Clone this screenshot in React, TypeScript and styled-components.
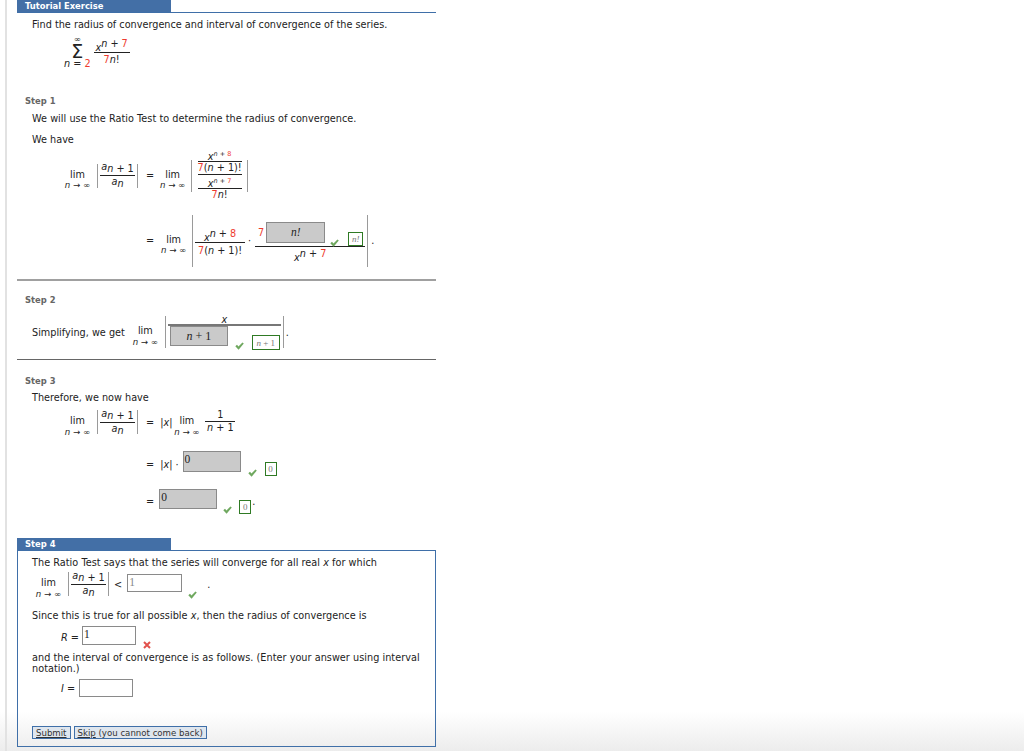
import styled, { createGlobalStyle } from "styled-components"

const GlobalStyle = createGlobalStyle`
	html, body {
		margin: 0;
		padding: 0;
		background: #fff;
	}
	body {
		height: 751px;
		overflow: hidden;
		font-family: "DejaVu Sans", Verdana, sans-serif;
		font-size: 9.7px;
		color: #222;
		background: linear-gradient(to bottom, #fff 0, #fff 712px, #ececec 751px);
	}
`

const Page = styled.div`
	margin-left: 5px;
	padding-left: 10px;
	width: 419px;
	height: 751px;
	border-left: 2px solid #e2e2e2;
	box-sizing: content-box;
`

const TabHeader = styled.div`
	height: 12px;
	border-bottom: 1px solid #3f6fa8;
`

const Tab = styled.div`
	width: 146px;
	height: 12px;
	padding-left: 8px;
	background: #436fa6;
	color: #fff;
	font-weight: bold;
	line-height: 12px;
	font-size: 8.4px;
`

const Sentence = styled.div<{ $top?: number; $left?: number; $spread?: boolean }>`
	margin: ${(p) => p.$top ?? 0}px 0 0 ${(p) => p.$left ?? 15}px;
	line-height: 11px;
	letter-spacing: ${(p) => (p.$spread ? 0.035 : 0)}px;
`

const StepLabel = styled.div<{ $top: number }>`
	margin: ${(p) => p.$top}px 0 0 8px;
	font-weight: bold;
	color: #666;
	font-size: 8.4px;
	line-height: 12px;
`

const Rule = styled.div<{ $top: number; $size: number; $color: string }>`
	margin-top: ${(p) => p.$top}px;
	height: ${(p) => p.$size}px;
	background: ${(p) => p.$color};
`

const MathRow = styled.div<{ $top: number; $left: number; $height: number }>`
	display: flex;
	align-items: center;
	margin: ${(p) => p.$top}px 0 0 ${(p) => p.$left}px;
	height: ${(p) => p.$height}px;
`

const I = styled.i`
	font-style: italic;
`

const Red = styled.span`
	color: #ee3b2e;
`

const Sup = styled.span<{ $tiny?: boolean }>`
	font-size: ${(p) => (p.$tiny ? 6.5 : 9.7)}px;
	vertical-align: 4px;
	line-height: 0;
	font-style: normal;
`

const SubA = styled.span`
	font-size: 9.7px;
	vertical-align: 2px;
	font-style: italic;
	line-height: 0;
`

const SigmaStack = styled.div`
	display: inline-flex;
	flex-direction: column;
	align-items: center;
	flex: none;
	line-height: 11px;
	white-space: pre;
`

const Sigma = styled.span`
	font-size: 19px;
	line-height: 13px;
`

const Frac = styled.div<{ $width?: number }>`
	display: inline-flex;
	flex-direction: column;
	align-items: center;
	width: ${(p) => (p.$width ? `${p.$width}px` : "auto")};
	flex: none;
`

const Num = styled.div<{ $height?: number; $tight?: boolean }>`
	display: flex;
	align-items: flex-end;
	justify-content: center;
	white-space: pre;
	height: ${(p) => p.$height ?? 12}px;
	line-height: ${(p) => (p.$tight ? 8 : 12)}px;
`

const Den = styled.div<{ $height?: number; $bar?: number; $barColor?: string; $pad?: number }>`
	align-self: stretch;
	display: flex;
	align-items: flex-start;
	justify-content: center;
	white-space: pre;
	box-sizing: content-box;
	padding-top: ${(p) => p.$pad ?? 0}px;
	border-top: ${(p) => p.$bar ?? 1}px solid ${(p) => p.$barColor ?? "#222"};
	height: ${(p) => (p.$height ?? 12) - (p.$pad ?? 0)}px;
	line-height: 12px;
`

const Lim = styled.div<{ $width?: number }>`
	display: inline-flex;
	flex-direction: column;
	align-items: center;
	width: ${(p) => p.$width ?? 31}px;
	margin-top: 9px;
	line-height: 10.5px;
	flex: none;
`

const LimTo = styled.span`
	font-size: 8.6px;
	white-space: pre;
`

const Abs = styled.div<{ $height: number; $width?: number }>`
	display: flex;
	align-items: center;
	justify-content: center;
	height: ${(p) => p.$height}px;
	width: ${(p) => (p.$width ? `${p.$width}px` : "auto")};
	padding: 0 2px;
	border-left: 1px solid #9a9a9a;
	border-right: 1px solid #9a9a9a;
	box-sizing: border-box;
	flex: none;
`

const Gap = styled.span<{ $w: number }>`
	display: inline-block;
	width: ${(p) => p.$w}px;
	flex: none;
`

const AnswerBox = styled.div<{ $w: number; $h: number; $fill?: boolean; $center?: boolean; $muted?: boolean }>`
	display: flex;
	align-items: ${(p) => (p.$center ? "center" : "flex-start")};
	justify-content: ${(p) => (p.$center ? "center" : "flex-start")};
	width: ${(p) => p.$w}px;
	height: ${(p) => p.$h}px;
	box-sizing: border-box;
	padding-left: ${(p) => (p.$center ? 0 : 1)}px;
	border: 1px solid #8a8a8a;
	background: ${(p) => (p.$fill ? "#cacaca" : "#fff")};
	color: ${(p) => (p.$muted ? "#888" : "#222")};
	font-family: "Liberation Serif", serif;
	font-size: 11.5px;
	line-height: 14px;
	flex: none;
`

const KeyBox = styled.div<{ $w: number; $h: number }>`
	display: flex;
	align-items: center;
	justify-content: center;
	width: ${(p) => p.$w}px;
	height: ${(p) => p.$h}px;
	box-sizing: border-box;
	border: 1px solid #2f7a24;
	background: #fff;
	color: #777;
	font-family: "Liberation Serif", serif;
	font-size: 9px;
	flex: none;
`

const Raised = styled.div<{ $y: number }>`
	display: flex;
	align-items: center;
	transform: translateY(${(p) => p.$y}px);
	flex: none;
`

const SerifItalic = styled.span`
	font-style: italic;
	font-family: "Liberation Serif", serif;
`

const BoxSum = styled.span`
	font-size: 12px;
`

const Mark = styled.svg`
	display: block;
	flex: none;
`

const Check = () => (
	<Mark width="9" height="8" viewBox="0 0 9 8">
		<path d="M0.3 4.2 L2 2.8 L3.5 4.4 L7.4 0.4 L8.8 1.5 L3.6 7.8 Z" fill="#6fa85f" />
	</Mark>
)

const Cross = () => (
	<Mark width="8" height="8" viewBox="0 0 8 8">
		<path d="M1 1 L7 7 M7 1 L1 7" stroke="#e2524d" strokeWidth="2" />
	</Mark>
)

const StepBox = styled.div`
	height: 197px;
	box-sizing: border-box;
	border: 1px solid #3f6fa8;
`

const Actions = styled.div`
	display: flex;
	gap: 3px;
	margin: 29px 0 0 14px;
`

const Button = styled.button`
	height: 13px;
	padding: 0 3px;
	margin: 0;
	border: 1px solid #3f6fa8;
	background: #dfe6ee;
	color: #333;
	font-family: "DejaVu Sans", Verdana, sans-serif;
	font-size: 8.6px;
	line-height: 10px;
`

const Under = styled.span`
	text-decoration: underline;
`

const LimN = ({ width }: { width?: number }) => (
	<Lim $width={width}>
		lim
		<LimTo>
			<I>n</I> → ∞
		</LimTo>
	</Lim>
)

const RatioAbs = () => (
	<Abs $height={24} $width={41}>
		<Frac $width={35}>
			<Num>
				<span>
					<SubA>a</SubA>
					<I>n</I> + 1
				</span>
			</Num>
			<Den $pad={2}>
				<span>
					<SubA>a</SubA>
					<I>n</I>
				</span>
			</Den>
		</Frac>
	</Abs>
)

const App = () => {
	return (
		<>
			<GlobalStyle />
			<Page>
				<TabHeader>
					<Tab>Tutorial Exercise</Tab>
				</TabHeader>
				<Sentence $top={6}>Find the radius of convergence and interval of convergence of the series.</Sentence>

				<MathRow $top={5} $left={47} $height={33}>
					<SigmaStack>
						<LimTo>∞</LimTo>
						<Sigma>Σ</Sigma>
						<span>
							<I>n</I> = <Red>2</Red>
						</span>
					</SigmaStack>
					<Gap $w={3} />
					<Frac $width={36}>
						<Num $height={14} $tight>
							<span>
								<I>x</I>
								<Sup>
									<I>n</I> + <Red>7</Red>
								</Sup>
							</span>
						</Num>
						<Den $pad={1}>
							<span>
								<Red>7</Red>
								<I>n</I>!
							</span>
						</Den>
					</Frac>
				</MathRow>

				<StepLabel $top={27}>Step 1</StepLabel>
				<Sentence $top={6} $spread>
					We will use the Ratio Test to determine the radius of convergence.
				</Sentence>
				<Sentence $top={10}>We have</Sentence>

				<MathRow $top={7} $left={45} $height={47}>
					<LimN />
					<Gap $w={4} />
					<RatioAbs />
					<Gap $w={8} />=<Gap $w={3} />
					<LimN />
					<Gap $w={3} />
					<Abs $height={32} $width={57}>
						<Raised $y={-2}>
							<Frac>
								<Num $height={14} $tight>
									<span>
										<I>x</I>
										<Sup $tiny>
											<I>n</I> + <Red>8</Red>
										</Sup>
									</span>
								</Num>
								<Den $height={12}>
									<span>
										<Red>7</Red>(<I>n</I> + 1)!
									</span>
								</Den>
								<Den $height={13} $pad={3}>
									<span>
										<I>x</I>
										<Sup $tiny>
											<I>n</I> + <Red>7</Red>
										</Sup>
									</span>
								</Den>
								<Den $height={11}>
									<span>
										<Red>7</Red>
										<I>n</I>!
									</span>
								</Den>
							</Frac>
						</Raised>
					</Abs>
				</MathRow>

				<MathRow $top={15} $left={129} $height={53}>
					=<Gap $w={4} />
					<LimN />
					<Gap $w={3} />
					<Abs $height={52} $width={176}>
						<Frac $width={50}>
							<Num $height={15} $tight>
								<span>
									<I>x</I>
									<Sup>
										<I>n</I> + <Red>8</Red>
									</Sup>
								</span>
							</Num>
							<Den $height={11} $pad={2}>
								<span>
									<Red>7</Red>(<I>n</I> + 1)!
								</span>
							</Den>
						</Frac>
						<Gap $w={3} />·<Gap $w={4} />
						<Frac $width={110}>
							<Num $height={24}>
								<Gap $w={3} />
								<Raised $y={-7}>
									<Red>7</Red>
								</Raised>
								<Gap $w={2} />
								<Raised $y={-3}>
									<AnswerBox $w={59} $h={21} $fill $center>
										<SerifItalic>n!</SerifItalic>
									</AnswerBox>
								</Raised>
								<Gap $w={5} />
								<Raised $y={1}>
									<Check />
								</Raised>
								<Gap $w={9} />
								<Raised $y={0}>
									<KeyBox $w={15} $h={14}>
										<SerifItalic>n!</SerifItalic>
									</KeyBox>
								</Raised>
								<Gap $w={2} />
							</Num>
							<Den $height={13} $pad={5}>
								<span>
									<I>x</I>
									<Sup>
										<I>n</I> + <Red>7</Red>
									</Sup>
								</span>
							</Den>
						</Frac>
					</Abs>
					<Gap $w={3} />.
				</MathRow>

				<Rule $top={12} $size={2} $color="#a0a0a0" />
				<StepLabel $top={13}>Step 2</StepLabel>

				<MathRow $top={10} $left={15} $height={32}>
					Simplifying, we get
					<Gap $w={5} />
					<LimN />
					<Gap $w={4} />
					<Abs $height={32} $width={119}>
						<Frac $width={113}>
							<Num $height={9} $tight>
								<I>x</I>
							</Num>
							<Den $height={23} $bar={2} $barColor="#777">
								<Gap $w={3} />
								<AnswerBox $w={58} $h={20} $fill $center>
									<BoxSum>
										<SerifItalic>n</SerifItalic> + 1
									</BoxSum>
								</AnswerBox>
								<Gap $w={7} />
								<Raised $y={16}>
									<Check />
								</Raised>
								<Gap $w={8} />
								<Raised $y={9}>
									<KeyBox $w={28} $h={15}>
										<SerifItalic>n</SerifItalic>&nbsp;+ 1
									</KeyBox>
								</Raised>
								<Gap $w={2} />
							</Den>
						</Frac>
					</Abs>
					<Gap $w={2} />.
				</MathRow>

				<Rule $top={11} $size={1} $color="#666" />
				<StepLabel $top={15}>Step 3</StepLabel>
				<Sentence $top={5}>Therefore, we now have</Sentence>

				<MathRow $top={6} $left={45} $height={26}>
					<LimN />
					<Gap $w={4} />
					<RatioAbs />
					<Gap $w={8} />=<Gap $w={6} />
					|<I>x</I>|
					<LimN width={29} />
					<Gap $w={4} />
					<Raised $y={-1}>
						<Frac $width={30}>
							<Num>1</Num>
							<Den>
								<span>
									<I>n</I> + 1
								</span>
							</Den>
						</Frac>
					</Raised>
				</MathRow>

				<MathRow $top={16} $left={129} $height={27}>
					=<Gap $w={6} />
					|<I>x</I>| ·
					<Gap $w={4} />
					<Raised $y={-3}>
						<AnswerBox $w={58} $h={21} $fill>
							0
						</AnswerBox>
					</Raised>
					<Gap $w={7} />
					<Raised $y={8}>
						<Check />
					</Raised>
					<Gap $w={8} />
					<Raised $y={4}>
						<KeyBox $w={12} $h={14}>
							0
						</KeyBox>
					</Raised>
				</MathRow>

				<MathRow $top={10} $left={129} $height={27}>
					=<Gap $w={5} />
					<Raised $y={-3}>
						<AnswerBox $w={58} $h={20} $fill>
							0
						</AnswerBox>
					</Raised>
					<Gap $w={6} />
					<Raised $y={8}>
						<Check />
					</Raised>
					<Gap $w={7} />
					<Raised $y={5}>
						<KeyBox $w={12} $h={14}>
							0
						</KeyBox>
					</Raised>
					<Gap $w={1} />.
				</MathRow>

				<Rule $top={23} $size={0} $color="transparent" />
				<Tab>Step 4</Tab>
				<StepBox>
					<Sentence $top={6} $left={14} $spread>
						The Ratio Test says that the series will converge for all real <I>x</I> for which
					</Sentence>
					<MathRow $top={0} $left={15} $height={32}>
						<LimN />
						<Gap $w={4} />
						<RatioAbs />
						<Gap $w={5} />
						&lt;
						<Gap $w={5} />
						<Raised $y={-1}>
							<AnswerBox $w={55} $h={18} $muted>
								1
							</AnswerBox>
						</Raised>
						<Gap $w={6} />
						<Raised $y={11}>
							<Check />
						</Raised>
						<Gap $w={10} />.
					</MathRow>
					<Sentence $top={10} $left={14} $spread>
						Since this is true for all possible <I>x</I>, then the radius of convergence is
					</Sentence>
					<MathRow $top={4} $left={43} $height={24}>
						<I>R</I>&nbsp;=
						<Gap $w={3} />
						<Raised $y={-2}>
							<AnswerBox $w={54} $h={19}>
								1
							</AnswerBox>
						</Raised>
						<Gap $w={7} />
						<Raised $y={8}>
							<Cross />
						</Raised>
					</MathRow>
					<Sentence $top={3} $left={14} $spread>
						and the interval of convergence is as follows. (Enter your answer using interval notation.)
					</Sentence>
					<MathRow $top={5} $left={43} $height={18}>
						<I>I</I>&nbsp;=
						<Gap $w={4} />
						<AnswerBox $w={54} $h={18} />
					</MathRow>
					<Actions>
						<Button>
							<Under>Submit</Under>
						</Button>
						<Button>
							<Under>Skip</Under> (you cannot come back)
						</Button>
					</Actions>
				</StepBox>
			</Page>
		</>
	)
}

export default App
